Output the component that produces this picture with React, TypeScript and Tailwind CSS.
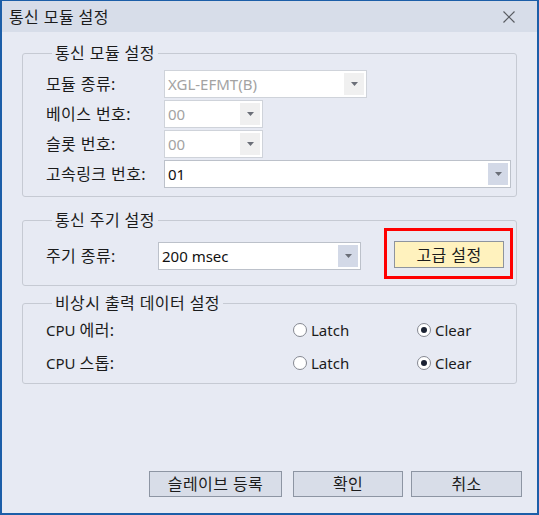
import React from "react";

const font = "font-['Noto_Sans','Noto_Sans_CJK_KR',sans-serif]";

function Arrow({ tone }: { tone: "gray" | "blue" }) {
    return (
        <div
            className={
                tone === "blue"
                    ? "flex h-full w-[20px] items-center justify-center bg-[#d3d9e7]"
                    : "flex h-full w-[20px] items-center justify-center bg-[#f0f0f0]"
            }
        >
            <svg width="7" height="4" viewBox="0 0 7 4">
                <polygon points="0,0 7,0 3.5,4" fill="#6b6f78" />
            </svg>
        </div>
    );
}

function Combo({
    value,
    width,
    dim,
    tone,
}: {
    value: string;
    width: string;
    dim?: boolean;
    tone: "gray" | "blue";
}) {
    return (
        <div
            className={`flex h-[28px] ${width} items-stretch border bg-white py-[2px] pr-[2px] ${
                dim ? "border-[#cfd3da]" : "border-[#bcc1ca]"
            }`}
        >
            <span
                className={`flex flex-1 items-center pl-[3px] text-[15px] leading-none tracking-normal ${
                    dim ? "text-[#a3a3a3]" : "text-[#111]"
                }`}
            >
                {value}
            </span>
            <Arrow tone={tone} />
        </div>
    );
}

function Radio({ checked, label }: { checked?: boolean; label: string }) {
    return (
        <div className="flex items-center gap-[4px]">
            <span className="flex h-[14px] w-[14px] items-center justify-center rounded-full border border-[#858891] bg-white">
                {checked && <span className="h-[6px] w-[6px] rounded-full bg-[#1b2233]" />}
            </span>
            <span className="text-[15px] leading-none tracking-normal">{label}</span>
        </div>
    );
}

function Group({
    title,
    className,
    children,
}: {
    title: string;
    className?: string;
    children: React.ReactNode;
}) {
    return (
        <fieldset className={`rounded-[3px] border border-[#c6cad3] ${className ?? ""}`}>
            <legend className="ml-[6px] px-[3px] leading-[20px]">{title}</legend>
            {children}
        </fieldset>
    );
}

export default function App() {
    return (
        <div
            className={`flex h-[515px] w-[539px] flex-col border-x-2 border-b-2 border-t border-[#1c5ea8] bg-[#e7eaf3] text-[16px] tracking-[0.4px] text-[#1b1b1b] ${font}`}
        >
            <div className="flex h-[31px] items-center justify-between bg-[#d7dde9] pl-[7px] pr-[22px]">
                <span>통신 모듈 설정</span>
                <svg width="12" height="12" viewBox="0 0 12 12">
                    <path d="M0.5 0.5 L11.5 11.5 M11.5 0.5 L0.5 11.5" stroke="#5a5d63" strokeWidth="1.2" />
                </svg>
            </div>

            <div className="flex flex-1 flex-col px-[20px] pt-[11px]">
                <Group title="통신 모듈 설정" className="pb-[8px] pl-[23px] pt-[7px]">
                    <div className="flex flex-col gap-[2px]">
                        <div className="flex h-[28px] items-center">
                            <span className="w-[118px]">모듈 종류:</span>
                            <Combo value="XGL-EFMT(B)" width="w-[203px]" dim tone="gray" />
                        </div>
                        <div className="flex h-[28px] items-center">
                            <span className="w-[118px]">베이스 번호:</span>
                            <Combo value="00" width="w-[99px]" dim tone="gray" />
                        </div>
                        <div className="flex h-[28px] items-center">
                            <span className="w-[118px]">슬롯 번호:</span>
                            <Combo value="00" width="w-[99px]" dim tone="gray" />
                        </div>
                        <div className="flex h-[28px] items-center">
                            <span className="w-[118px]">고속링크 번호:</span>
                            <Combo value="01" width="w-[347px]" tone="blue" />
                        </div>
                    </div>
                </Group>

                <Group title="통신 주기 설정" className="mt-[13px] pb-[15px] pl-[23px] pt-[12px]">
                    <div className="flex h-[28px] items-center">
                        <span className="w-[112px]">주기 종류:</span>
                        <Combo value="200 msec" width="w-[203px]" tone="blue" />
                        <div className="relative mb-[3px] ml-[33px]">
                            <button className="flex h-[27px] w-[110px] items-center justify-center border border-[#8e949e] bg-[#fff2be]">
                                고급 설정
                            </button>
                            <div className="pointer-events-none absolute -bottom-[11px] -left-[10px] -right-[9px] -top-[13px] border-[3px] border-[#ff0000]" />
                        </div>
                    </div>
                </Group>

                <Group title="비상시 출력 데이터 설정" className="mt-[7px] pb-[8px] pl-[23px] pt-[5px]">
                    <div className="grid grid-cols-[247px_124px_1fr] gap-y-[9px]">
                        <div className="flex h-[24px] items-center">
                            <span className="mr-[4px] text-[15px] tracking-normal">CPU</span>에러:
                        </div>
                        <div className="flex items-center">
                            <Radio label="Latch" />
                        </div>
                        <div className="flex items-center">
                            <Radio checked label="Clear" />
                        </div>
                        <div className="flex h-[24px] items-center">
                            <span className="mr-[4px] text-[15px] tracking-normal">CPU</span>스톱:
                        </div>
                        <div className="flex items-center">
                            <Radio label="Latch" />
                        </div>
                        <div className="flex items-center">
                            <Radio checked label="Clear" />
                        </div>
                    </div>
                </Group>

                <div className="flex-1" />

                <div className="-mr-[5px] flex justify-end pb-[16px]">
                    <button className="h-[26px] w-[133px] border border-[#8d95a3] bg-[#d8dde8]">
                        슬레이브 등록
                    </button>
                    <button className="ml-[11px] h-[26px] w-[110px] border border-[#8d95a3] bg-[#d8dde8]">
                        확인
                    </button>
                    <button className="ml-[8px] h-[26px] w-[111px] border border-[#8d95a3] bg-[#d8dde8]">
                        취소
                    </button>
                </div>
            </div>
        </div>
    );
}
